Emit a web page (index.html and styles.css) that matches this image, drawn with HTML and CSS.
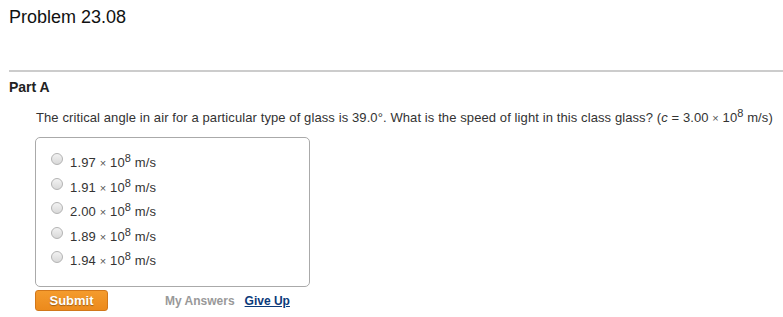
FILE: index.html
```html
<!DOCTYPE html>
<html>
<head>
<meta charset="utf-8">
<link rel="stylesheet" href="styles.css">
</head>
<body>
<h1 class="title">Problem 23.08</h1>
<div class="rule"></div>
<h2 class="part">Part A</h2>
<p class="question">The critical angle in air for a particular type of glass is 39.0°. What is the speed of light in this class glass? (<i>c</i> = 3.00 <span class="times">×</span> 10<sup>8</sup> m/s)</p>
<div class="choices">
  <label class="choice"><span class="radio"></span><span class="ans">1.97 <span class="times">×</span> 10<sup>8</sup> m/s</span></label>
  <label class="choice"><span class="radio"></span><span class="ans">1.91 <span class="times">×</span> 10<sup>8</sup> m/s</span></label>
  <label class="choice"><span class="radio"></span><span class="ans">2.00 <span class="times">×</span> 10<sup>8</sup> m/s</span></label>
  <label class="choice"><span class="radio"></span><span class="ans">1.89 <span class="times">×</span> 10<sup>8</sup> m/s</span></label>
  <label class="choice"><span class="radio"></span><span class="ans">1.94 <span class="times">×</span> 10<sup>8</sup> m/s</span></label>
</div>
<div class="actions">
  <button class="submit">Submit</button>
  <span class="my-answers">My Answers</span>
  <a class="give-up" href="#">Give Up</a>
</div>
</body>
</html>
```

FILE: styles.css
```css
html, body {
  margin: 0;
  padding: 0;
  background: #fff;
}
body {
  font-family: "Liberation Sans", Arial, sans-serif;
  color: #333;
}
.title {
  margin: 0;
  padding: 7px 0 0 9px;
  font-size: 18px;
  line-height: 21px;
  font-weight: normal;
  color: #111;
}
.rule {
  margin: 42px 0 0 9px;
  height: 2px;
  background: #ccc;
}
.part {
  margin: 7px 0 0 9px;
  font-size: 14px;
  line-height: 16px;
  font-weight: bold;
  color: #222;
}
.question {
  margin: 15px 0 0 36px;
  font-size: 13px;
  line-height: 15px;
  letter-spacing: 0.1px;
  white-space: nowrap;
}
sup {
  font-size: 11px;
  line-height: 0;
  vertical-align: 5px;
}
.times {
  font-size: 11px;
  color: #555;
}
.choices {
  box-sizing: border-box;
  margin: 11px 0 0 35px;
  width: 275px;
  height: 150px;
  border: 1px solid #aaa;
  border-radius: 5px;
  padding: 15px 0 0 15px;
  display: flex;
  flex-direction: column;
}
.choice {
  display: flex;
  align-items: flex-start;
  height: 24.5px;
  font-size: 13px;
  line-height: 15px;
  letter-spacing: 0.15px;
}
.radio {
  box-sizing: border-box;
  width: 12px;
  height: 12px;
  border-radius: 50%;
  border: 1px solid #b3b3b3;
  background: linear-gradient(#f2f2f2, #d9d9d9);
  margin-right: 7px;
  flex: none;
}
.ans {
  padding-top: 2px;
}
.actions {
  margin: 3px 0 0 35px;
  display: flex;
  align-items: baseline;
}
.submit {
  box-sizing: border-box;
  width: 73px;
  height: 21px;
  padding: 0;
  border: 1px solid #d2771a;
  border-radius: 3px;
  background: linear-gradient(#f49b2d, #ec8a1c);
  color: #fff;
  font-family: "Liberation Sans", Arial, sans-serif;
  font-weight: bold;
  font-size: 13px;
  line-height: 18px;
  text-shadow: 0 1px 1px rgba(0,0,0,0.35);
}
.my-answers {
  margin-left: 57px;
  font-size: 12px;
  font-weight: bold;
  color: #999;
}
.give-up {
  margin-left: 10px;
  font-size: 12px;
  font-weight: bold;
  color: #0b3a7a;
  text-decoration: underline;
}
```
